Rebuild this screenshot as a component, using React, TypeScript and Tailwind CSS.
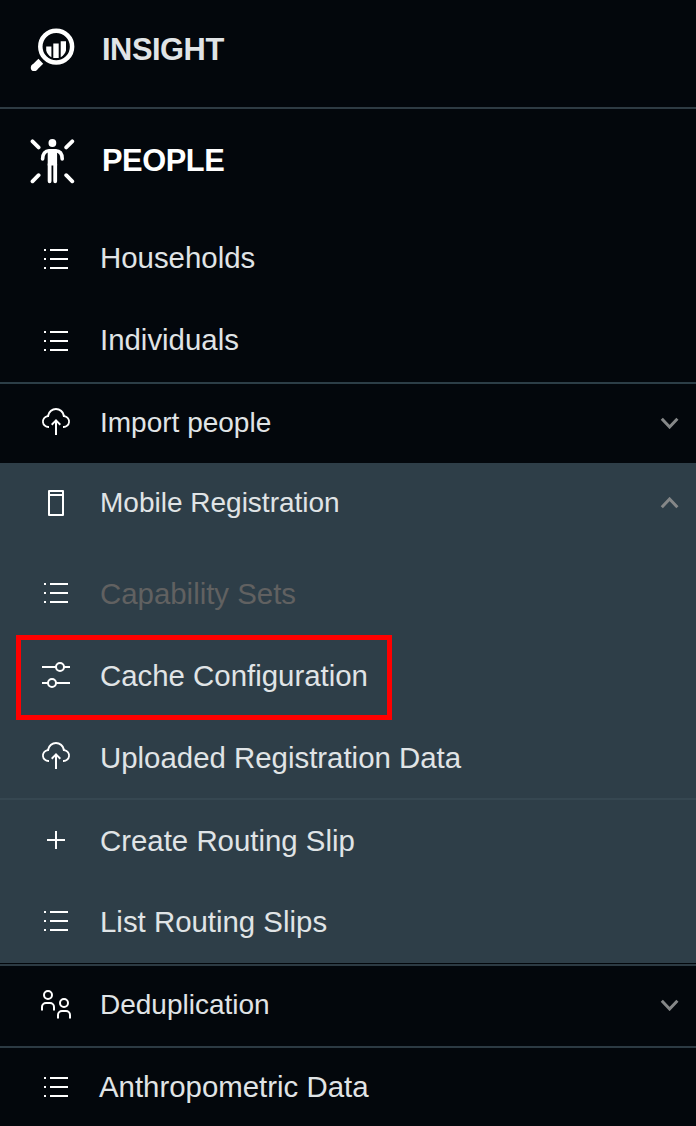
import type { ReactNode } from "react";

function Icon({ children, className = "" }: { children: ReactNode; className?: string }) {
  return (
    <svg viewBox="0 0 32 32" className={`ml-10 size-8 shrink-0 text-white ${className}`} fill="currentColor">
      {children}
    </svg>
  );
}

function ListIcon({ className = "" }: { className?: string }) {
  return (
    <Icon className={className}>
      <path d="M10 6h18v2H10zM10 15h18v2H10zM10 24h18v2H10zM4 6h2v2H4zM4 15h2v2H4zM4 24h2v2H4z" />
    </Icon>
  );
}

function CloudUploadIcon({ className = "" }: { className?: string }) {
  return (
    <Icon className={className}>
      <path d="M11 18l1.41 1.41L15 16.83V29h2V16.83l2.59 2.58L21 18l-5-5-5 5z" />
      <path d="M23.5 22H23v-2h.5a4.5 4.5 0 0 0 .36-9H23l-.1-.82a7 7 0 0 0-13.88 0L9 11h-.86a4.5 4.5 0 0 0 .36 9H9v2h-.5A6.5 6.5 0 0 1 7.2 9.14a9 9 0 0 1 17.6 0A6.5 6.5 0 0 1 23.5 22z" />
    </Icon>
  );
}

function MobileIcon({ className = "" }: { className?: string }) {
  return (
    <Icon className={className}>
      <path fillRule="evenodd" d="M9 3h14a1 1 0 0 1 1 1v24a1 1 0 0 1-1 1H9a1 1 0 0 1-1-1V4a1 1 0 0 1 1-1zm1 2v2h12V5zm0 4v18h12V9z" />
    </Icon>
  );
}

function AdjustIcon({ className = "" }: { className?: string }) {
  return (
    <Icon className={className}>
      <g fill="none" stroke="currentColor" strokeWidth="2">
        <path d="M2 8h14M24 8h6M2 24h6M16 24h14" />
        <circle cx="20" cy="8" r="4" />
        <circle cx="12" cy="24" r="4" />
      </g>
    </Icon>
  );
}

function PlusIcon({ className = "" }: { className?: string }) {
  return (
    <Icon className={className}>
      <path d="M15 7h2v8h8v2h-8v8h-2v-8H7v-2h8z" />
    </Icon>
  );
}

function PersonsIcon({ className = "" }: { className?: string }) {
  return (
    <Icon className={className}>
      <g fill="none" stroke="currentColor" strokeWidth="2">
        <circle cx="8" cy="7" r="4" />
        <path d="M2 22.5V19a4 4 0 0 1 4-4h4a4 4 0 0 1 4 4v3.5" />
        <circle cx="24" cy="15" r="4" />
        <path d="M18 30.5V27a4 4 0 0 1 4-4h4a4 4 0 0 1 4 4v3.5" />
      </g>
    </Icon>
  );
}

function Chevron({ up = false, className = "" }: { up?: boolean; className?: string }) {
  return (
    <svg viewBox="0 0 20 12" className={`mr-4 ml-auto h-3 w-5 ${className}`} fill="none" stroke="#858788" strokeWidth="3">
      <path d={up ? "M1.8 10.2L9.6 2l7.8 8.2" : "M1.8 1.8L9.6 10l7.8-8.2"} />
    </svg>
  );
}

const sub = "ml-7 text-[29.4px] leading-none";
const group = "ml-7 pt-0.5 text-[28px] leading-none";
const heading = "ml-[26px] text-[30.8px] leading-none font-bold tracking-[-0.45px]";

export default function App() {
  return (
    <nav className="h-[1126px] w-[696px] overflow-hidden bg-[#03070c] font-['Liberation_Sans',Arial,sans-serif] whitespace-nowrap text-[#e0e4e6]">
      <div className="flex h-[109px] items-center border-b-2 border-[#2e3b43] pb-1.5">
        <svg viewBox="0 0 46 46" className="ml-[30px] size-[46px] shrink-0" fill="none" stroke="white">
          <circle cx="26.2" cy="18.7" r="15.9" strokeWidth="4.5" />
          <circle cx="4.2" cy="39.7" r="3.4" fill="white" stroke="none" />
          <path d="M4.2 39.7l6.6-6.4" strokeWidth="6.8" />
          <path d="M16.2 18.5h5.2v10.7c-2.6-1.2-4.6-4.1-5.2-6.7zM23.3 15.6h5.4v14.3h-5.4zM30.7 13.2h5.3v9.3c-.6 2.6-2.7 5.5-5.3 6.7z" fill="white" stroke="none" />
        </svg>
        <span className={heading}>INSIGHT</span>
      </div>

      <div className="flex h-[104px] items-center text-white">
        <svg viewBox="0 0 46 46" className="mt-px ml-[30px] size-[46px] shrink-0" fill="none" stroke="white" strokeLinecap="round">
          <path d="M2.5 2.3L8.6 8.4M42.3 2.3L36.2 8.4M2.5 42.3L8.6 36.2M42.3 42.3L36.2 36.2" strokeWidth="3.8" />
          <circle cx="22.4" cy="4" r="3.9" fill="white" stroke="none" />
          <path d="M12.6 20c0-5.5 2.6-8.3 6.6-8.3h6.4c4 0 6.6 2.8 6.6 8.3" strokeWidth="3.6" />
          <path d="M17.7 10.5h9.4v16h-9.4z" fill="white" stroke="none" />
          <path d="M19.6 25v17.3M25.2 25v17.3" strokeWidth="3.8" />
        </svg>
        <span className={heading}>PEOPLE</span>
      </div>

      <div className="border-b-2 border-[#2c3e47] pt-[5px]">
        <div className="flex h-[82px] items-center pb-0.5"><ListIcon className="mt-0.5" /><span className={sub}>Households</span></div>
        <div className="flex h-[82px] items-center pb-0.5"><ListIcon className="mt-px" /><span className={sub}>Individuals</span></div>
      </div>

      <div className="flex h-[79px] items-center pb-[3px]"><CloudUploadIcon /><span className={group}>Import people</span><Chevron className="mt-px" /></div>

      <section className="h-[500px] bg-[#2e3e48]">
        <div className="flex h-[78px] items-center"><MobileIcon className="mt-0.5" /><span className={group}>Mobile Registration</span><Chevron up className="mt-0.5" /></div>
        <div className="border-b-2 border-[#364751] pt-3">
          <div className="flex h-[82px] items-center"><ListIcon className="mb-0.5" /><span className={`${sub} text-[#616161]`}>Capability Sets</span></div>
          <div className="relative flex h-[82px] items-center">
            <AdjustIcon className="mb-0.5" />
            <span className={sub}>Cache Configuration</span>
            <div className="absolute top-0 left-4 h-[85px] w-[376px] border-[5px] border-[#ff0000]" />
          </div>
          <div className="flex h-[81px] items-center pt-px"><CloudUploadIcon className="mb-1" /><span className={sub}>Uploaded Registration Data</span></div>
        </div>
        <div className="flex h-[82px] items-center"><PlusIcon className="mb-0.5" /><span className={sub}>Create Routing Slip</span></div>
        <div className="flex h-[81px] items-center pb-0.5"><ListIcon className="mb-0.5" /><span className={sub}>List Routing Slips</span></div>
      </section>

      <div className="mt-px flex h-[84px] items-center border-t-2 border-b-2 border-[#2c3a43] pb-1"><PersonsIcon /><span className={group}>Deduplication</span><Chevron className="mt-px" /></div>
      <div className="flex h-[78px] items-center"><ListIcon /><span className="ml-[27px] text-[29.4px] leading-none">Anthropometric Data</span></div>
    </nav>
  );
}
